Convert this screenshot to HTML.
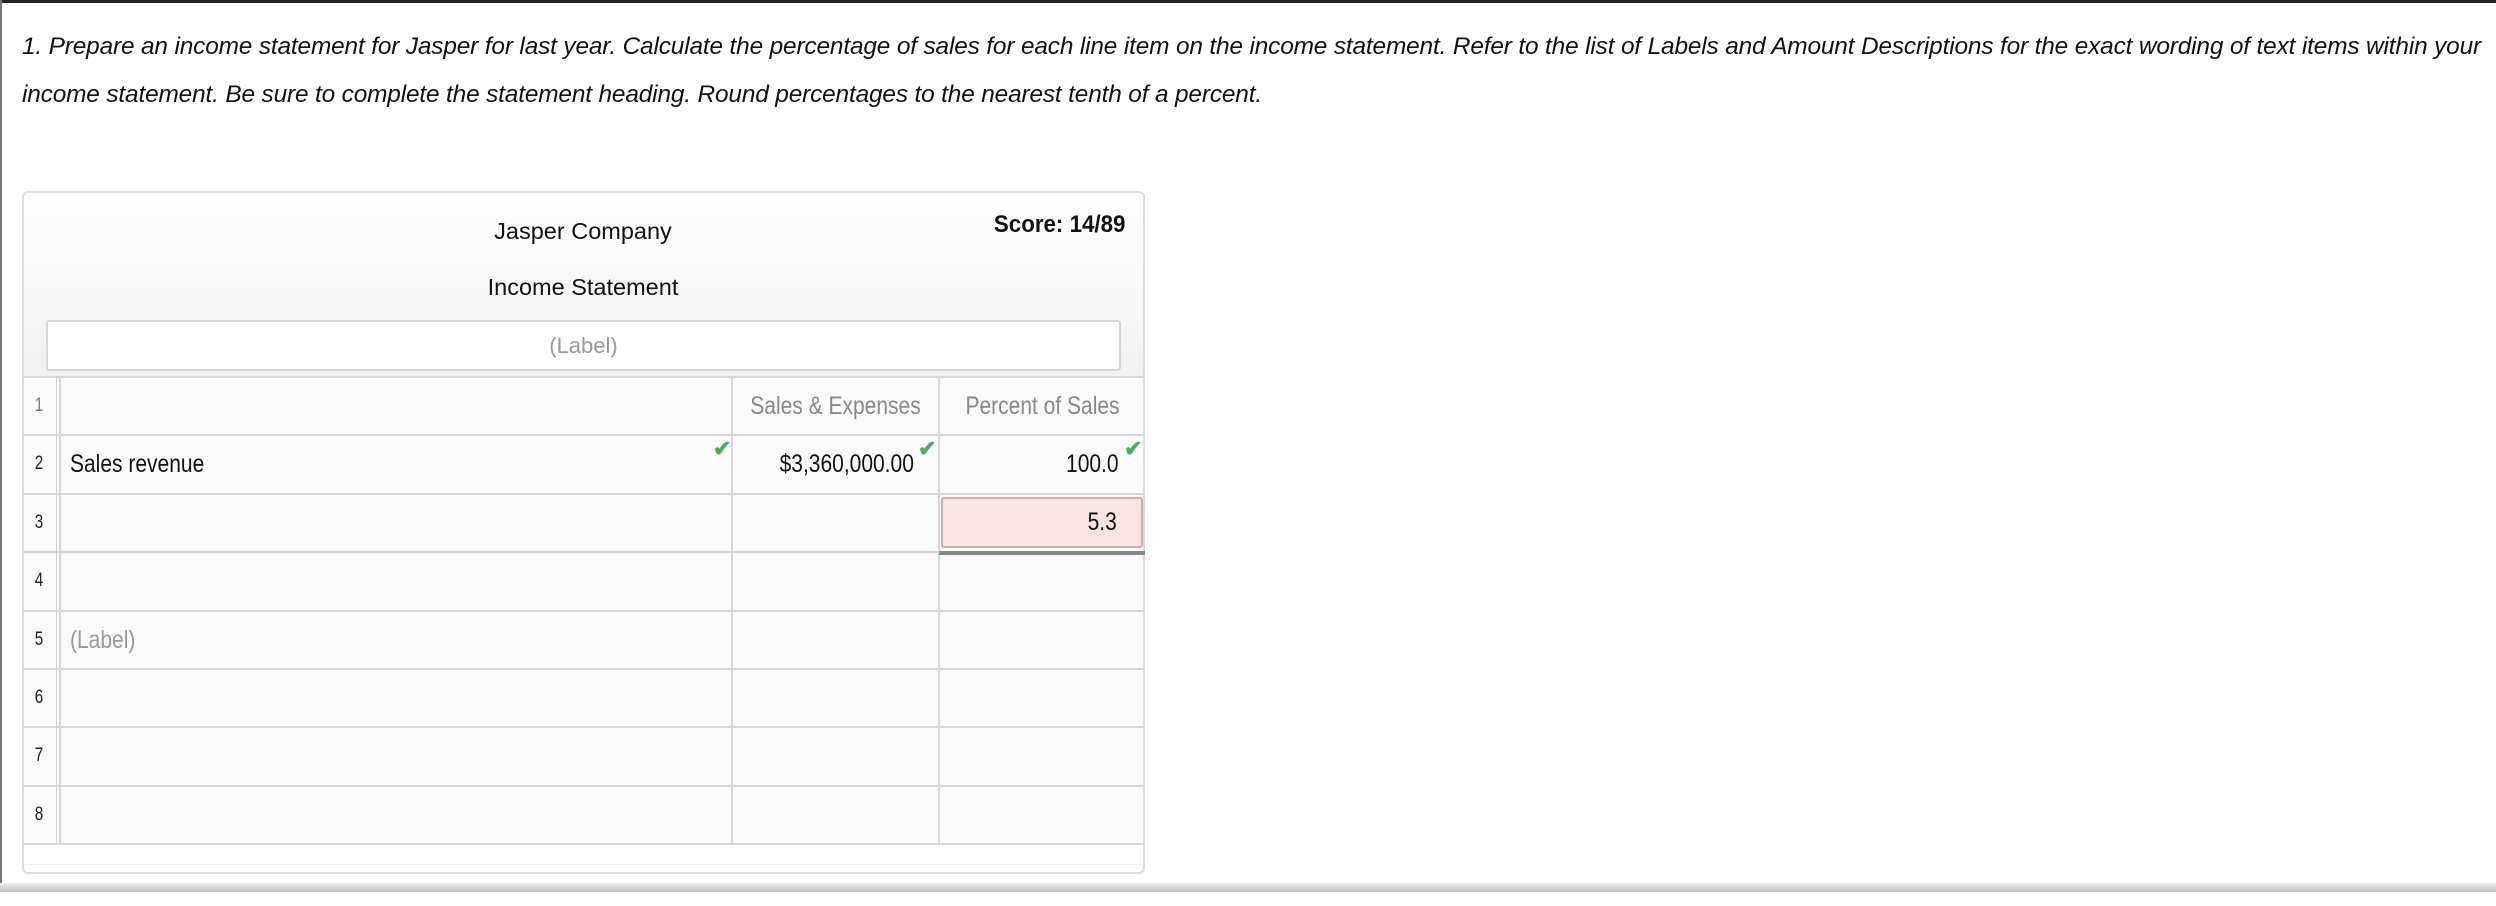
<!DOCTYPE html>
<html><head><style>
*{margin:0;padding:0;box-sizing:border-box}
body{width:2496px;height:906px;background:#fff;position:relative;overflow:hidden;font-family:"Liberation Sans",sans-serif}
.a{position:absolute}
.q{left:22px;font-style:italic;font-size:24.4px;color:#111;white-space:nowrap;letter-spacing:-0.15px}
.n{font-size:25px;white-space:nowrap;transform:scaleX(.84)}
.l{transform-origin:left center}
.r{transform-origin:right center}
.c{transform-origin:center center}
.hl{left:22px;width:1123px;height:2px;background:#d6d6d6}
.vl{width:2px;background:#d6d6d6;top:377px;height:467px}
.rn{left:22px;width:34px;text-align:center;font-size:19px;color:#222;transform:scaleX(.8)}
.ck{color:#4cae5c;font-size:22px;font-weight:bold}
</style></head><body>
<div class="a" style="left:0;top:0;width:2496px;height:3px;background:#222"></div>
<div class="a" style="left:0;top:0;width:2px;height:885px;background:#777"></div>
<div class="a" style="left:0;top:883px;width:2496px;height:9px;background:linear-gradient(#f0f0f0,#bdbdbd)"></div>

<div class="a q" style="top:33px">1. Prepare an income statement for Jasper for last year. Calculate the percentage of sales for each line item on the income statement. Refer to the list of Labels and Amount Descriptions for the exact wording of text items within your</div>
<div class="a q" style="top:81px">income statement. Be sure to complete the statement heading. Round percentages to the nearest tenth of a percent.</div>

<div class="a" style="left:22px;top:191px;width:1123px;height:683px;border:2px solid #dcdcdc;border-radius:6px;background:#fff"></div>
<div class="a" style="left:24px;top:193px;width:1119px;height:184px;border-radius:5px 5px 0 0;background:linear-gradient(#fff,#f1f1f1)"></div>
<div class="a" style="left:24px;top:377px;width:1119px;height:467px;background:#fafafa"></div>
<div class="a" style="left:24px;top:864px;width:1119px;height:1px;background:#eee"></div>

<div class="a" style="left:383px;width:400px;text-align:center;top:218px;font-size:23.5px;color:#111">Jasper Company</div>
<div class="a" style="left:383px;width:400px;text-align:center;top:274px;font-size:23.5px;color:#111">Income Statement</div>
<div class="a r" style="right:1371px;top:211px;font-size:24px;font-weight:bold;color:#111;transform:scaleX(.93)">Score: 14/89</div>

<div class="a" style="left:46px;top:320px;width:1075px;height:51px;background:#fff;border:2px solid #d6d6d6;border-radius:3px"></div>
<div class="a" style="left:46px;width:1075px;text-align:center;top:333px;font-size:22px;color:#999">(Label)</div>

<div class="a hl" style="top:376px"></div>
<div class="a hl" style="top:434px"></div>
<div class="a hl" style="top:493px"></div>
<div class="a hl" style="top:551px"></div>
<div class="a hl" style="top:610px"></div>
<div class="a hl" style="top:668px"></div>
<div class="a hl" style="top:726px"></div>
<div class="a hl" style="top:785px"></div>
<div class="a hl" style="top:843px"></div>
<div class="a vl" style="left:56px;width:1px"></div>
<div class="a vl" style="left:59px;width:2px"></div>
<div class="a vl" style="left:731px"></div>
<div class="a vl" style="left:938px"></div>

<div class="a rn" style="top:395px;color:#777">1</div>
<div class="a rn" style="top:453px">2</div>
<div class="a rn" style="top:512px">3</div>
<div class="a rn" style="top:570px">4</div>
<div class="a rn" style="top:629px">5</div>
<div class="a rn" style="top:687px">6</div>
<div class="a rn" style="top:745px">7</div>
<div class="a rn" style="top:804px">8</div>

<div class="a n c" style="left:733px;width:205px;text-align:center;top:392px;color:#888">Sales &amp; Expenses</div>
<div class="a n c" style="left:940px;width:205px;text-align:center;top:392px;color:#888">Percent of Sales</div>

<div class="a n l" style="left:70px;top:450px;color:#111">Sales revenue</div>
<div class="a n r" style="right:1582px;top:450px;color:#111">$3,360,000.00</div>
<div class="a n r" style="right:1377px;top:450px;color:#111">100.0</div>
<div class="a ck" style="left:713px;top:436px">✔</div>
<div class="a ck" style="left:918px;top:436px">✔</div>
<div class="a ck" style="left:1124px;top:436px">✔</div>

<div class="a" style="left:941px;top:497px;width:202px;height:51px;background:#fae3e3;border:2px solid #dba7a7;border-radius:3px"></div>
<div class="a" style="left:939px;top:551px;width:206px;height:4px;background:#888"></div>
<div class="a n r" style="right:1379px;top:508px;color:#111">5.3</div>

<div class="a n l" style="left:70px;top:626px;color:#999">(Label)</div>
</body></html>
